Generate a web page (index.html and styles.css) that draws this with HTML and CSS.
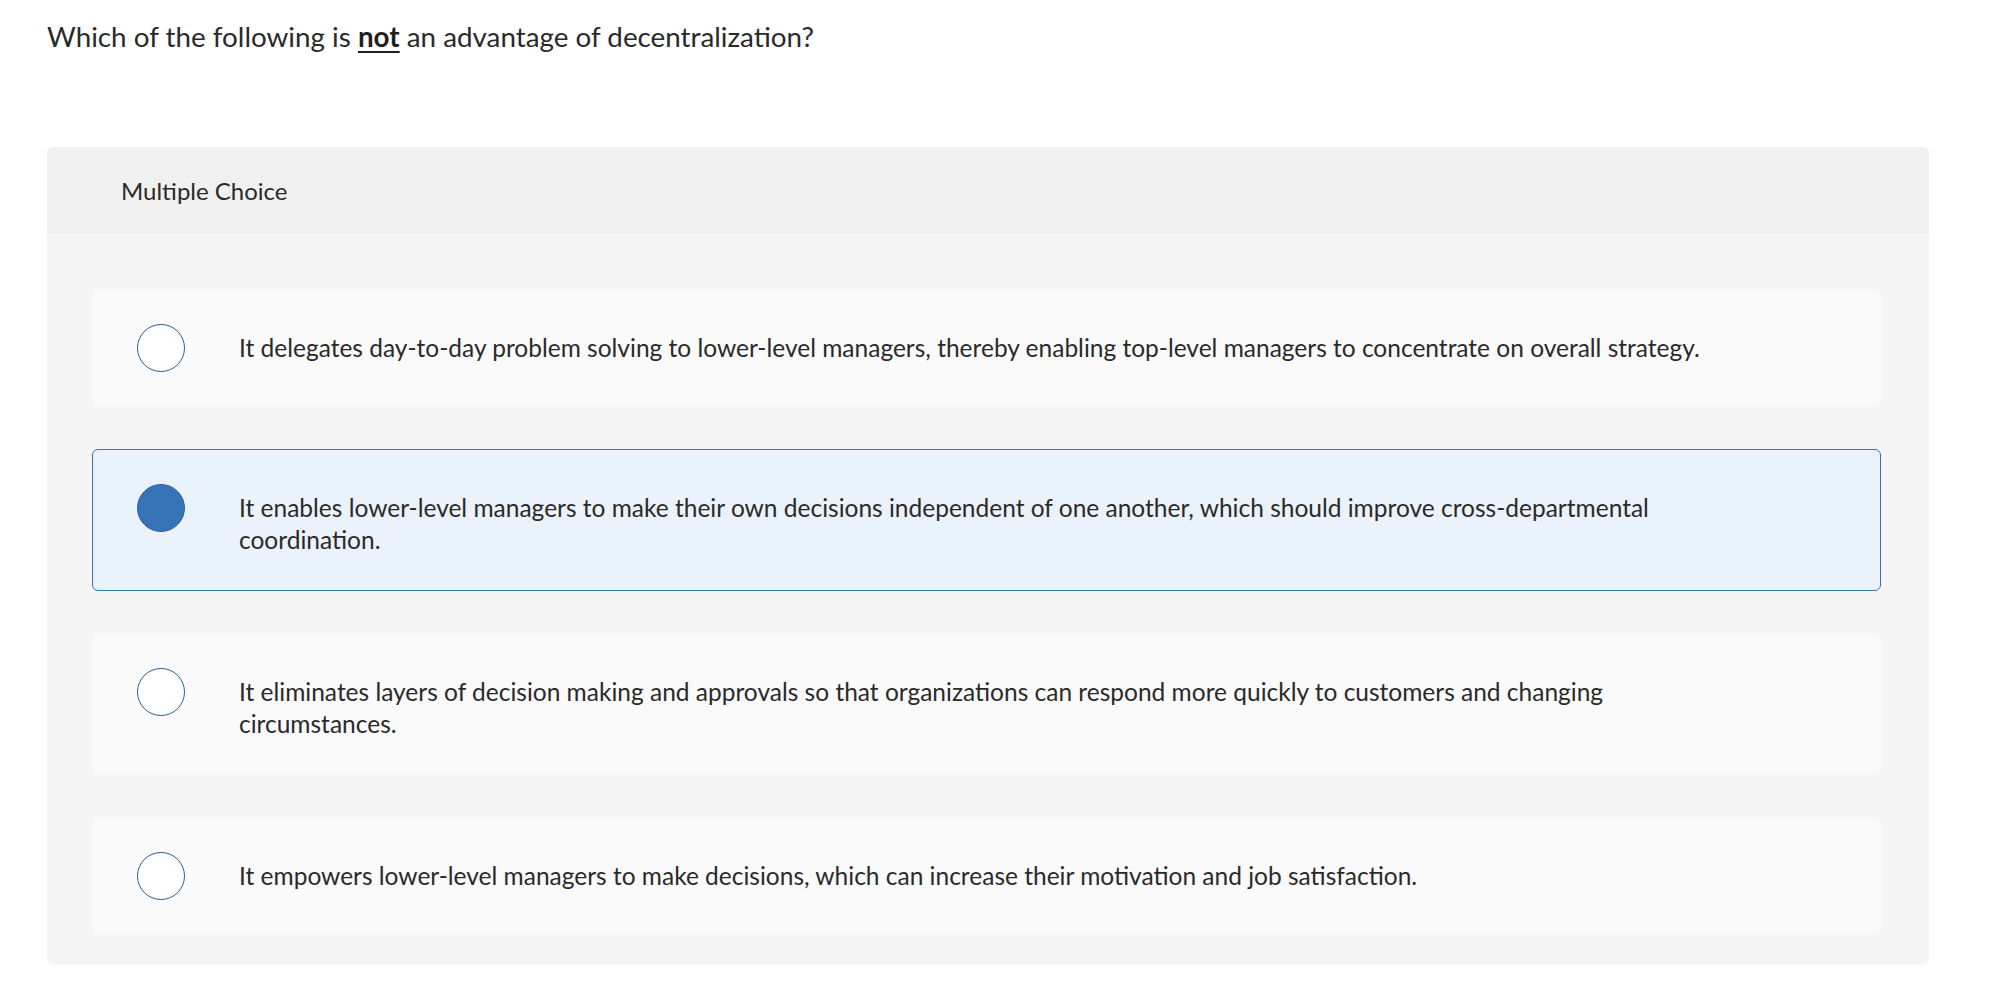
FILE: index.html
```html
<!DOCTYPE html>
<html lang="en">
<head>
<meta charset="utf-8">
<title>Multiple Choice</title>
<link rel="stylesheet" href="styles.css">
</head>
<body>
<div class="page">
  <p class="question">Which of the following is <strong class="emph">not</strong> an advantage of decentralization?</p>
  <section class="card">
    <div class="card-head">Multiple Choice</div>
    <div class="card-body">
      <div class="option">
        <span class="radio"></span>
        <span class="label">It delegates day-to-day problem solving to lower-level managers, thereby enabling top-level managers to concentrate on overall strategy.</span>
      </div>
      <div class="option selected">
        <span class="radio"></span>
        <span class="label">It enables lower-level managers to make their own decisions independent of one another, which should improve cross-departmental coordination.</span>
      </div>
      <div class="option">
        <span class="radio"></span>
        <span class="label">It eliminates layers of decision making and approvals so that organizations can respond more quickly to customers and changing circumstances.</span>
      </div>
      <div class="option">
        <span class="radio"></span>
        <span class="label">It empowers lower-level managers to make decisions, which can increase their motivation and job satisfaction.</span>
      </div>
    </div>
  </section>
</div>
</body>
</html>
```
FILE: styles.css
```css
html, body {
  margin: 0;
  padding: 0;
  background: #ffffff;
}
body {
  font-family: Lato, "Liberation Sans", sans-serif;
  color: #2a2a2a;
}
.page {
  padding: 0 74px 0 47px;
}
.question {
  margin: 0;
  padding-top: 20px;
  font-size: 27.8px;
  line-height: 34px;
  color: #2a2a2a;
}
.emph {
  font-weight: 700;
  color: #1f1f1f;
  text-decoration: underline;
  text-underline-offset: 4px;
  text-decoration-thickness: 2px;
}
.card {
  margin-top: 93px;
  width: 1882px;
  border-radius: 6px;
  overflow: hidden;
  background: #f5f5f5;
}
.card-head {
  height: 87px;
  display: flex;
  align-items: center;
  padding-left: 74px;
  background: #f0f0f0;
  font-size: 24px;
  color: #2a2a2a;
}
.card-body {
  display: flex;
  flex-direction: column;
  gap: 44px;
  padding: 56px 49px 31px 46px;
}
.option {
  display: flex;
  align-items: flex-start;
  gap: 54px;
  padding: 34px 140px 34px 44px;
  background: #fafafa;
  border: 1px solid #fafafa;
  border-radius: 6px;
  margin: -1px;
}
.option.selected {
  background: #eaf2fb;
  border-color: #3a72b1;
}
.radio {
  flex: 0 0 auto;
  width: 46px;
  height: 46px;
  border: 1px solid #2e5f94;
  border-radius: 50%;
  background: #ffffff;
}
.selected .radio {
  background: #3673b7;
  border-color: #2d62a0;
}
.label {
  padding-top: 8px;
  font-size: 24.5px;
  line-height: 32px;
  color: #2a2a2a;
}
```
